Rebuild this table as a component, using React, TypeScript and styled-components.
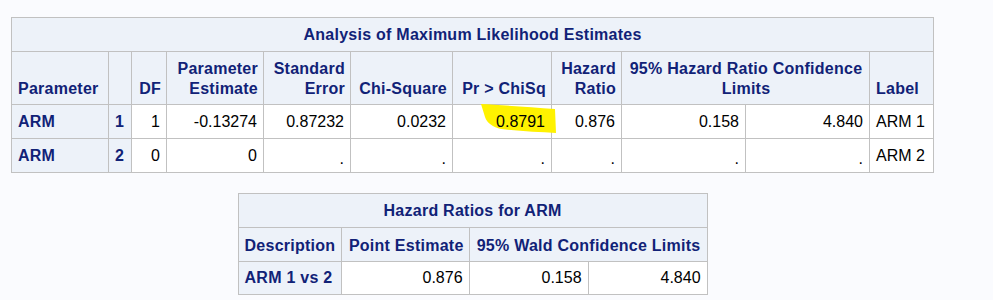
import React from "react";
import styled, { createGlobalStyle } from "styled-components";

const GlobalStyle = createGlobalStyle`
  html, body {
    margin: 0;
    padding: 0;
    background: #fafbfe;
    font-family: Arial, "Liberation Sans", Helvetica, sans-serif;
  }
`;

const Page = styled.div`
  padding: 17px 0 0 11px;
`;

const Stack = styled.div`
  display: inline-flex;
  flex-direction: column;
  align-items: center;
  gap: 20px;
`;

const Table = styled.table<{ $w: number }>`
  border-collapse: collapse;
  table-layout: fixed;
  width: ${(p) => p.$w}px;
  border: 1px solid #c1c1c1;
  font-size: 16px;
  line-height: 20px;
`;

const Col = styled.col<{ $w: number }>`
  width: ${(p) => p.$w}px;
`;

const Row = styled.tr<{ $h: number }>`
  height: ${(p) => p.$h}px;
`;

const Title = styled.th`
  background: #edf2f9;
  color: #112277;
  font-weight: bold;
  letter-spacing: 0.25px;
  text-align: center;
  vertical-align: middle;
  border: 1px solid #c1c1c1;
  padding: 0 6px;
`;

const Head = styled.th<{ $align?: "left" | "right" | "center" }>`
  background: #edf2f9;
  color: #112277;
  font-weight: bold;
  letter-spacing: 0.25px;
  text-align: ${(p) => p.$align ?? "right"};
  vertical-align: bottom;
  border: 1px solid #c1c1c1;
  padding: 0 5px 5px 6px;
  white-space: normal;
`;

const RowHead = styled.th`
  background: #edf2f9;
  color: #112277;
  font-weight: bold;
  letter-spacing: 0.25px;
  text-align: left;
  vertical-align: middle;
  border: 1px solid #c1c1c1;
  padding: 0 6px;
  white-space: nowrap;
`;

const Cell = styled.td<{ $align?: "left" | "right" }>`
  background: #ffffff;
  color: #000000;
  text-align: ${(p) => p.$align ?? "right"};
  vertical-align: middle;
  border: 1px solid #c1c1c1;
  padding: 0 6px;
  white-space: nowrap;
`;

const Dot = styled(Cell)`
  vertical-align: bottom;
  padding-bottom: 4px;
  line-height: 18px;
`;

const MarkedCell = styled(Cell)`
  position: relative;
`;

const Highlight = styled.svg`
  position: absolute;
  left: 26px;
  top: -2px;
  width: 80px;
  height: 34px;
  overflow: visible;
  z-index: 0;
  pointer-events: none;
`;

const CellText = styled.span`
  position: relative;
  z-index: 1;
`;

export default function App() {
  return (
    <>
      <GlobalStyle />
      <Page>
        <Stack>
          <Table $w={923}>
            <colgroup>
              <Col $w={97} />
              <Col $w={23} />
              <Col $w={35} />
              <Col $w={97} />
              <Col $w={87} />
              <Col $w={102} />
              <Col $w={99} />
              <Col $w={70} />
              <Col $w={124} />
              <Col $w={124} />
              <Col $w={64} />
            </colgroup>
            <thead>
              <Row $h={34}>
                <Title colSpan={11}>Analysis of Maximum Likelihood Estimates</Title>
              </Row>
              <Row $h={53}>
                <Head $align="left">Parameter</Head>
                <Head></Head>
                <Head>DF</Head>
                <Head>Parameter Estimate</Head>
                <Head>Standard Error</Head>
                <Head>Chi-Square</Head>
                <Head>Pr &gt; ChiSq</Head>
                <Head>Hazard Ratio</Head>
                <Head $align="center" colSpan={2}>
                  95% Hazard Ratio Confidence Limits
                </Head>
                <Head $align="left">Label</Head>
              </Row>
            </thead>
            <tbody>
              <Row $h={34}>
                <RowHead>ARM</RowHead>
                <RowHead>1</RowHead>
                <Cell>1</Cell>
                <Cell>-0.13274</Cell>
                <Cell>0.87232</Cell>
                <Cell>0.0232</Cell>
                <MarkedCell>
                  <Highlight viewBox="0 0 80 34" preserveAspectRatio="none">
                    <path
                      d="M2 1 C 20 2, 50 4, 76 6 L 77 30 C 60 29, 40 28, 22 26 C 14 24, 8 20, 6 14 Z"
                      fill="#fff200"
                    />
                  </Highlight>
                  <CellText>0.8791</CellText>
                </MarkedCell>
                <Cell>0.876</Cell>
                <Cell>0.158</Cell>
                <Cell>4.840</Cell>
                <Cell $align="left">ARM 1</Cell>
              </Row>
              <Row $h={34}>
                <RowHead>ARM</RowHead>
                <RowHead>2</RowHead>
                <Cell>0</Cell>
                <Cell>0</Cell>
                <Dot>.</Dot>
                <Dot>.</Dot>
                <Dot>.</Dot>
                <Dot>.</Dot>
                <Dot>.</Dot>
                <Dot>.</Dot>
                <Cell $align="left">ARM 2</Cell>
              </Row>
            </tbody>
          </Table>

          <Table $w={470}>
            <colgroup>
              <Col $w={103} />
              <Col $w={128} />
              <Col $w={119} />
              <Col $w={119} />
            </colgroup>
            <thead>
              <Row $h={34}>
                <Title colSpan={4}>Hazard Ratios for ARM</Title>
              </Row>
              <Row $h={34}>
                <Head $align="left">Description</Head>
                <Head>Point Estimate</Head>
                <Head $align="center" colSpan={2}>
                  95% Wald Confidence Limits
                </Head>
              </Row>
            </thead>
            <tbody>
              <Row $h={33}>
                <RowHead>ARM 1 vs 2</RowHead>
                <Cell>0.876</Cell>
                <Cell>0.158</Cell>
                <Cell>4.840</Cell>
              </Row>
            </tbody>
          </Table>
        </Stack>
      </Page>
    </>
  );
}
